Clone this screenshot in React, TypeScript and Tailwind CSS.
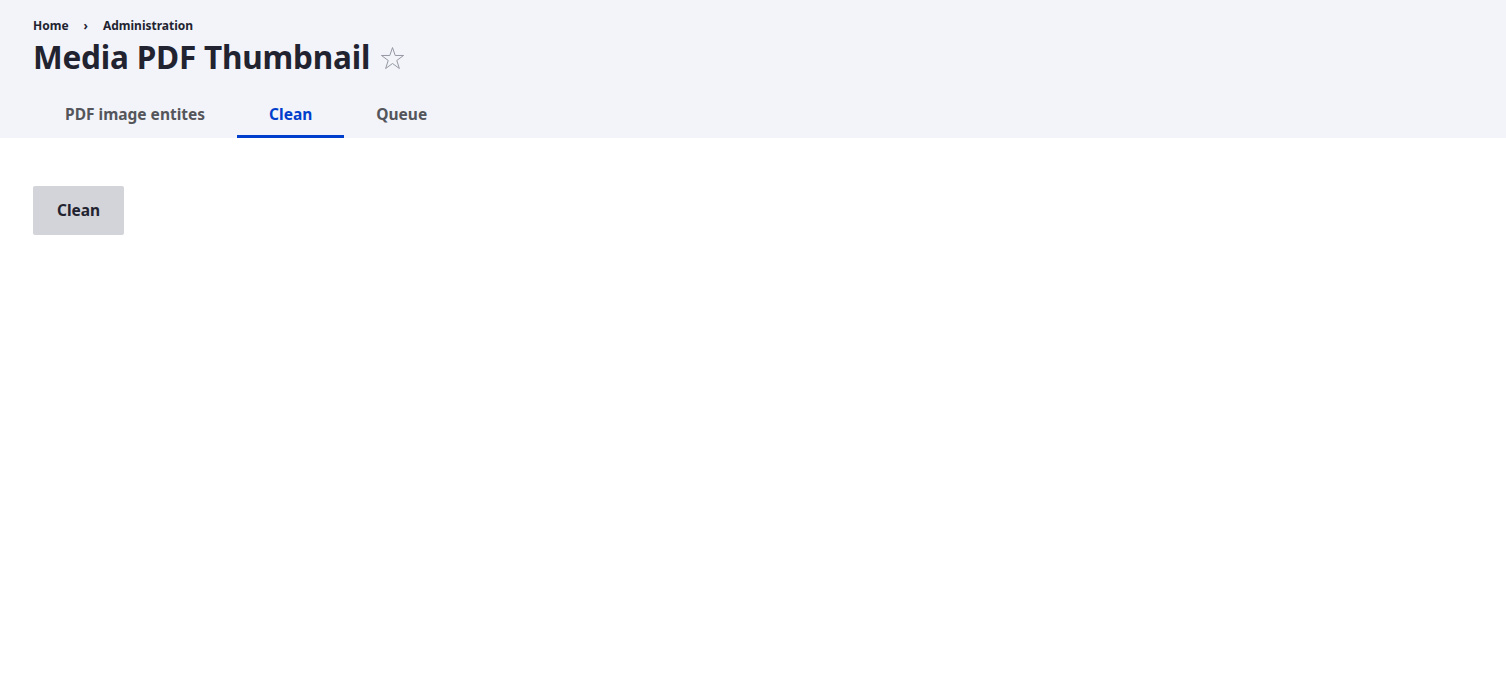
const tabs = [
  { label: "PDF image entites", active: false },
  { label: "Clean", active: true },
  { label: "Queue", active: false },
];

export default function App() {
  return (
    <div className="min-h-screen bg-white font-['Noto_Sans',sans-serif] text-[#222330]">
      <header className="bg-[#f3f4f9] px-[33px]">
        <nav className="flex items-center pt-[18px] text-[12px] font-bold leading-[16px]">
          <a className="text-[#222330]">Home</a>
          <span className="mx-[15px] text-[12px]">›</span>
          <a className="text-[#222330]">Administration</a>
        </nav>
        <div className="mt-[3px] flex items-center gap-[10px]">
          <h1 className="text-[31.5px] font-bold leading-[40px] tracking-[-0.2px]">Media PDF Thumbnail</h1>
          <svg viewBox="0 0 24 24" className="mt-[2px] h-[25px] w-[25px]" fill="none" stroke="#8e929c" strokeWidth="0.9" strokeLinejoin="miter">
            <path d="M12 1.5l2.6 7.6h8l-6.5 4.8 2.5 7.7L12 16.8l-6.6 4.8 2.5-7.7L1.4 9.1h8z" />
          </svg>
        </div>
        <ul className="mt-[21px] flex">
          {tabs.map((t) => (
            <li key={t.label}>
              <a
                className={
                  "block px-[32px] pb-[11px] pt-[6px] text-[15.5px] font-bold leading-[20px] border-b-[3px] " +
                  (t.active ? "border-[#003ecc] text-[#003ecc]" : "border-transparent text-[#55565b]")
                }
              >
                {t.label}
              </a>
            </li>
          ))}
        </ul>
      </header>
      <main className="px-[33px] pt-[48px]">
        <button className="h-[49px] rounded-[2px] bg-[#d3d4d9] px-[24px] text-[15.5px] font-bold text-[#222330]">
          Clean
        </button>
      </main>
    </div>
  );
}
